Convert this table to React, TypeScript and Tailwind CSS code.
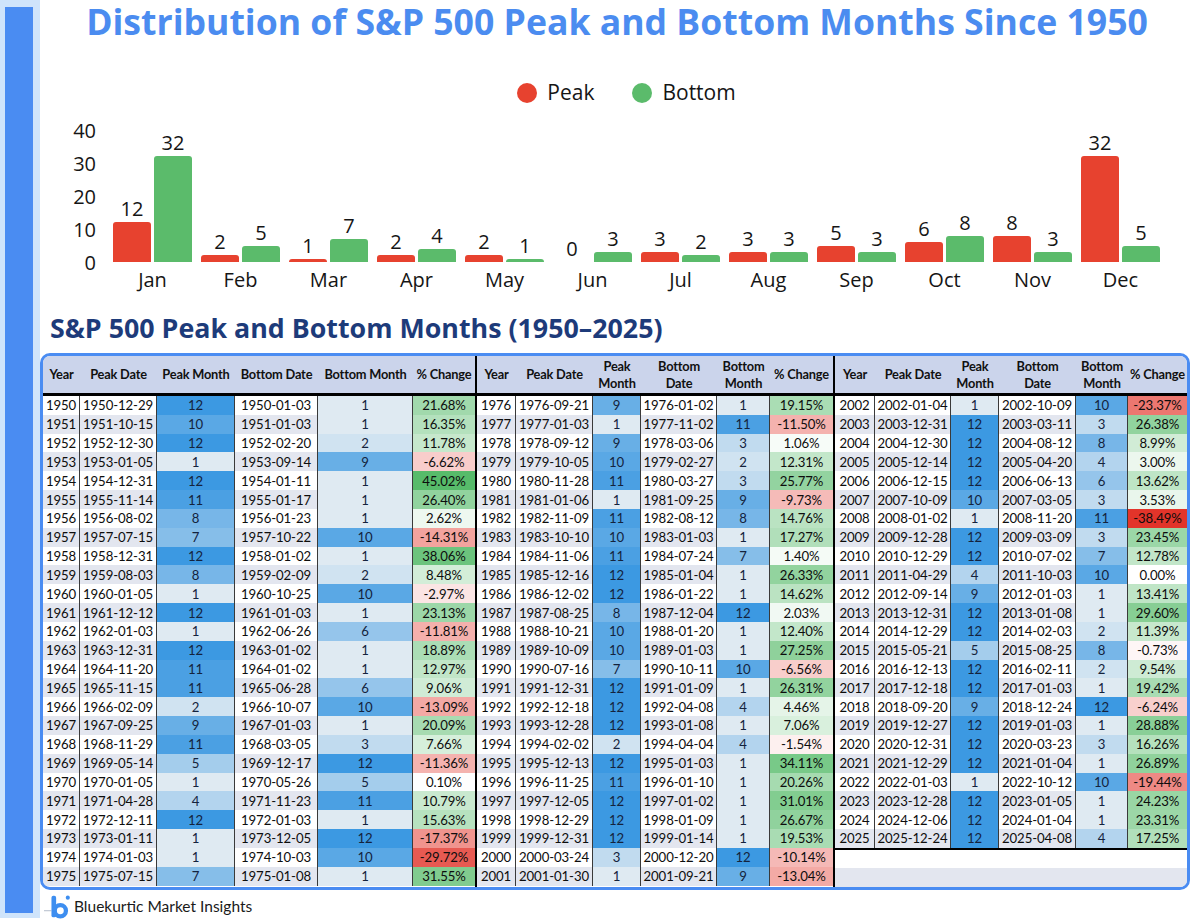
import React from 'react';

type Row = [number, string, number, string, number, number];

const months = ['Jan', 'Feb', 'Mar', 'Apr', 'May', 'Jun', 'Jul', 'Aug', 'Sep', 'Oct', 'Nov', 'Dec'];
const peaks = [12, 2, 1, 2, 2, 0, 3, 3, 5, 6, 8, 32];
const bottoms = [32, 5, 7, 4, 1, 3, 2, 3, 3, 8, 3, 5];

const sec1: Row[] = [
  [1950, '1950-12-29', 12, '1950-01-03', 1, 21.68],
  [1951, '1951-10-15', 10, '1951-01-03', 1, 16.35],
  [1952, '1952-12-30', 12, '1952-02-20', 2, 11.78],
  [1953, '1953-01-05', 1, '1953-09-14', 9, -6.62],
  [1954, '1954-12-31', 12, '1954-01-11', 1, 45.02],
  [1955, '1955-11-14', 11, '1955-01-17', 1, 26.4],
  [1956, '1956-08-02', 8, '1956-01-23', 1, 2.62],
  [1957, '1957-07-15', 7, '1957-10-22', 10, -14.31],
  [1958, '1958-12-31', 12, '1958-01-02', 1, 38.06],
  [1959, '1959-08-03', 8, '1959-02-09', 2, 8.48],
  [1960, '1960-01-05', 1, '1960-10-25', 10, -2.97],
  [1961, '1961-12-12', 12, '1961-01-03', 1, 23.13],
  [1962, '1962-01-03', 1, '1962-06-26', 6, -11.81],
  [1963, '1963-12-31', 12, '1963-01-02', 1, 18.89],
  [1964, '1964-11-20', 11, '1964-01-02', 1, 12.97],
  [1965, '1965-11-15', 11, '1965-06-28', 6, 9.06],
  [1966, '1966-02-09', 2, '1966-10-07', 10, -13.09],
  [1967, '1967-09-25', 9, '1967-01-03', 1, 20.09],
  [1968, '1968-11-29', 11, '1968-03-05', 3, 7.66],
  [1969, '1969-05-14', 5, '1969-12-17', 12, -11.36],
  [1970, '1970-01-05', 1, '1970-05-26', 5, 0.1],
  [1971, '1971-04-28', 4, '1971-11-23', 11, 10.79],
  [1972, '1972-12-11', 12, '1972-01-03', 1, 15.63],
  [1973, '1973-01-11', 1, '1973-12-05', 12, -17.37],
  [1974, '1974-01-03', 1, '1974-10-03', 10, -29.72],
  [1975, '1975-07-15', 7, '1975-01-08', 1, 31.55],
];

const sec2: Row[] = [
  [1976, '1976-09-21', 9, '1976-01-02', 1, 19.15],
  [1977, '1977-01-03', 1, '1977-11-02', 11, -11.5],
  [1978, '1978-09-12', 9, '1978-03-06', 3, 1.06],
  [1979, '1979-10-05', 10, '1979-02-27', 2, 12.31],
  [1980, '1980-11-28', 11, '1980-03-27', 3, 25.77],
  [1981, '1981-01-06', 1, '1981-09-25', 9, -9.73],
  [1982, '1982-11-09', 11, '1982-08-12', 8, 14.76],
  [1983, '1983-10-10', 10, '1983-01-03', 1, 17.27],
  [1984, '1984-11-06', 11, '1984-07-24', 7, 1.4],
  [1985, '1985-12-16', 12, '1985-01-04', 1, 26.33],
  [1986, '1986-12-02', 12, '1986-01-22', 1, 14.62],
  [1987, '1987-08-25', 8, '1987-12-04', 12, 2.03],
  [1988, '1988-10-21', 10, '1988-01-20', 1, 12.4],
  [1989, '1989-10-09', 10, '1989-01-03', 1, 27.25],
  [1990, '1990-07-16', 7, '1990-10-11', 10, -6.56],
  [1991, '1991-12-31', 12, '1991-01-09', 1, 26.31],
  [1992, '1992-12-18', 12, '1992-04-08', 4, 4.46],
  [1993, '1993-12-28', 12, '1993-01-08', 1, 7.06],
  [1994, '1994-02-02', 2, '1994-04-04', 4, -1.54],
  [1995, '1995-12-13', 12, '1995-01-03', 1, 34.11],
  [1996, '1996-11-25', 11, '1996-01-10', 1, 20.26],
  [1997, '1997-12-05', 12, '1997-01-02', 1, 31.01],
  [1998, '1998-12-29', 12, '1998-01-09', 1, 26.67],
  [1999, '1999-12-31', 12, '1999-01-14', 1, 19.53],
  [2000, '2000-03-24', 3, '2000-12-20', 12, -10.14],
  [2001, '2001-01-30', 1, '2001-09-21', 9, -13.04],
];

const sec3: Row[] = [
  [2002, '2002-01-04', 1, '2002-10-09', 10, -23.37],
  [2003, '2003-12-31', 12, '2003-03-11', 3, 26.38],
  [2004, '2004-12-30', 12, '2004-08-12', 8, 8.99],
  [2005, '2005-12-14', 12, '2005-04-20', 4, 3.0],
  [2006, '2006-12-15', 12, '2006-06-13', 6, 13.62],
  [2007, '2007-10-09', 10, '2007-03-05', 3, 3.53],
  [2008, '2008-01-02', 1, '2008-11-20', 11, -38.49],
  [2009, '2009-12-28', 12, '2009-03-09', 3, 23.45],
  [2010, '2010-12-29', 12, '2010-07-02', 7, 12.78],
  [2011, '2011-04-29', 4, '2011-10-03', 10, 0.0],
  [2012, '2012-09-14', 9, '2012-01-03', 1, 13.41],
  [2013, '2013-12-31', 12, '2013-01-08', 1, 29.6],
  [2014, '2014-12-29', 12, '2014-02-03', 2, 11.39],
  [2015, '2015-05-21', 5, '2015-08-25', 8, -0.73],
  [2016, '2016-12-13', 12, '2016-02-11', 2, 9.54],
  [2017, '2017-12-18', 12, '2017-01-03', 1, 19.42],
  [2018, '2018-09-20', 9, '2018-12-24', 12, -6.24],
  [2019, '2019-12-27', 12, '2019-01-03', 1, 28.88],
  [2020, '2020-12-31', 12, '2020-03-23', 3, 16.26],
  [2021, '2021-12-29', 12, '2021-01-04', 1, 26.89],
  [2022, '2022-01-03', 1, '2022-10-12', 10, -19.44],
  [2023, '2023-12-28', 12, '2023-01-05', 1, 24.23],
  [2024, '2024-12-06', 12, '2024-01-04', 1, 23.31],
  [2025, '2025-12-24', 12, '2025-04-08', 4, 17.25],
];

// column widths per section (last one of section 3 just fills)
const w1 = ['w-[37px]', 'w-[77px]', 'w-[78px]', 'w-[83px]', 'w-[95px]', 'w-[62px]'];
const w2 = ['w-[39px]', 'w-[77px]', 'w-[48px]', 'w-[76px]', 'w-[53px]', 'w-[63px]'];
const w3 = ['w-[40px]', 'w-[76px]', 'w-[48px]', 'w-[77px]', 'w-[52px]', 'flex-1'];

const head1 = [['Year'], ['Peak Date'], ['Peak Month'], ['Bottom Date'], ['Bottom Month'], ['% Change']];
const head2 = [['Year'], ['Peak Date'], ['Peak', 'Month'], ['Bottom', 'Date'], ['Bottom', 'Month'], ['% Change']];

const mix = (a: number[], b: number[], t: number) =>
  `rgb(${a.map((v, i) => Math.round(v + (b[i] - v) * t)).join(',')})`;

const monthBg = (m: number) => mix([223, 234, 242], [60, 153, 226], (m - 1) / 11);

const pctBg = (p: number) =>
  p >= 0
    ? mix([255, 255, 255], [87, 187, 106], Math.pow(p / 45.02, 0.8))
    : mix([255, 255, 255], [226, 52, 42], Math.pow(-p / 38.49, 0.8));

const Bar = ({ value, color }: { value: number; color: string }) => (
  <div className="flex w-[38px] flex-col items-center justify-end">
    <span className="mb-[1px] text-[20px] leading-[24px] text-[#151515]">{value}</span>
    <div className={`w-full rounded-t-[3px] ${color}`} style={{ height: value * 3.3 }} />
  </div>
);

const Section = ({
  rows,
  widths,
  heads,
  last,
}: {
  rows: Row[];
  widths: string[];
  heads: string[][];
  last?: boolean;
}) => (
  <div className={`flex flex-col ${last ? 'flex-1' : 'border-r-2 border-black'}`}>
    <div className="box-content flex h-[37px] border-b-[3px] border-black bg-[#cbd4eb]">
      {heads.map((h, i) => (
        <div
          key={i}
          className={`${widths[i]} flex shrink-0 flex-col items-center justify-center whitespace-nowrap text-center text-[12.8px] font-bold leading-[17px] tracking-[-0.2px] text-[#111]`}
        >
          {h.map((line) => (
            <span key={line}>{line}</span>
          ))}
        </div>
      ))}
    </div>
    {rows.map((r, idx) => {
      const zebra = idx % 2 === 0 ? 'bg-white' : 'bg-[#e3e6ef]';
      return (
        <div
          key={r[0]}
          className={`flex h-[18.83px] whitespace-nowrap text-[13.2px] leading-[18px] tracking-[-0.1px] text-[#0d0d0d] ${zebra}`}
        >
          <div className={`${widths[0]} flex shrink-0 items-center justify-center border-r border-[#3a3a3a]`}>{r[0]}</div>
          <div className={`${widths[1]} flex shrink-0 items-center justify-center border-r border-[#3a3a3a]`}>{r[1]}</div>
          <div
            className={`${widths[2]} flex shrink-0 items-center justify-center border-r border-[#3a3a3a] text-[#14233d]`}
            style={{ backgroundColor: monthBg(r[2]) }}
          >
            {r[2]}
          </div>
          <div className={`${widths[3]} flex shrink-0 items-center justify-center border-r border-[#3a3a3a]`}>{r[3]}</div>
          <div
            className={`${widths[4]} flex shrink-0 items-center justify-center border-r border-[#3a3a3a] text-[#14233d]`}
            style={{ backgroundColor: monthBg(r[4]) }}
          >
            {r[4]}
          </div>
          <div className={`${widths[5]} flex shrink-0 items-center justify-center`} style={{ backgroundColor: pctBg(r[5]) }}>
            {r[5].toFixed(2)}%
          </div>
        </div>
      );
    })}
    {last && (
      <div className="flex flex-col border-t-2 border-black">
        <div className="h-[17.83px] bg-white" />
        <div className="h-[18.83px] bg-[#e3e6ef]" />
      </div>
    )}
  </div>
);

const Logo = () => (
  <svg width="28" height="28" viewBox="0 0 30 30">
    <line x1="0" y1="19" x2="8" y2="19" stroke="#9aa7b8" strokeWidth="0.8" />
    <rect x="8" y="3" width="5" height="23" rx="2" fill="#3d8ef0" />
    <circle cx="17.5" cy="19" r="6" fill="none" stroke="#3d8ef0" strokeWidth="4.6" />
    <circle cx="25.5" cy="5" r="2.2" fill="#3d8ef0" />
  </svg>
);

const App: React.FC = () => {
  return (
    <div className="flex h-[922px] w-[1199px] bg-white" style={{ fontFamily: '"Open Sans", sans-serif' }}>
      <div className="flex h-[918px] w-[40px] shrink-0 flex-col bg-[#cfe4fb] px-[5px] pt-[7px] pb-[5px]">
        <div className="w-[28px] flex-1 bg-[#4a8cf2]" />
      </div>

      <div className="flex flex-1 flex-col pr-[9px]">
        <h1 className="pt-[1px] pl-[4px] text-center text-[35.6px] font-bold leading-[40px] text-[#4b8cf0]">
          Distribution of S&amp;P 500 Peak and Bottom Months Since 1950
        </h1>

        <div className="mt-[40px] flex h-[24px] items-center justify-center gap-[38px] pl-[23px] text-[21px] text-[#151515]">
          <div className="flex items-center gap-[10px]">
            <span className="h-[20px] w-[20px] rounded-full bg-[#e7422f]" />
            <span>Peak</span>
          </div>
          <div className="flex items-center gap-[10px]">
            <span className="h-[20px] w-[20px] rounded-full bg-[#5bbb6b]" />
            <span>Bottom</span>
          </div>
        </div>

        <div className="mt-[8.5px] flex">
          <div className="flex w-[56px] flex-col text-right text-[20px] text-[#151515]">
            {['40', '30', '20', '10', '0'].map((l) => (
              <div key={l} className="h-[33px] leading-[33px]">
                {l}
              </div>
            ))}
          </div>
          <div className="ml-[17px] flex gap-[9px]">
            {months.map((m, i) => (
              <div key={m} className="flex w-[79px] flex-col">
                <div className="flex h-[148.5px] items-end gap-[3px]">
                  <Bar value={peaks[i]} color="bg-[#e7422f]" />
                  <Bar value={bottoms[i]} color="bg-[#5bbb6b]" />
                </div>
                <div className="text-center text-[20px] leading-[36px] text-[#151515]">{m}</div>
              </div>
            ))}
          </div>
        </div>

        <h2 className="mt-[15px] pl-[10px] text-[26.8px] font-bold leading-[30px] text-[#1d3b7a]">
          S&amp;P 500 Peak and Bottom Months (1950–2025)
        </h2>

        <div
          className="mt-[10px] flex overflow-hidden rounded-[10px] border-[3px] border-[#4a8cf2]"
          style={{ fontFamily: 'Lato, "Liberation Sans", sans-serif' }}
        >
          <Section rows={sec1} widths={w1} heads={head1} />
          <Section rows={sec2} widths={w2} heads={head2} />
          <Section rows={sec3} widths={w3} heads={head2} last />
        </div>

        <div className="mt-[3px] flex items-center gap-[2px] pl-[4px]">
          <Logo />
          <span className="text-[15.5px] text-[#1a1a1a]" style={{ fontFamily: 'Lato, sans-serif' }}>
            Bluekurtic Market Insights
          </span>
        </div>
      </div>
    </div>
  );
};

export default App;
